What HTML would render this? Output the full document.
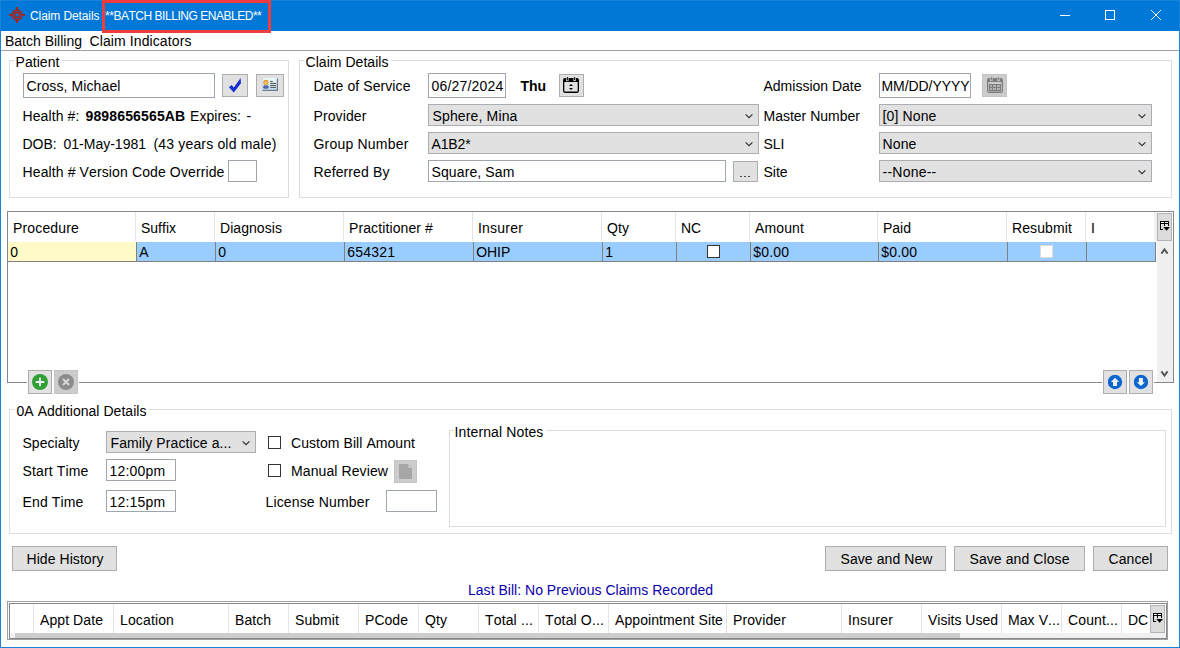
<!DOCTYPE html>
<html><head><meta charset="utf-8">
<style>
*{box-sizing:border-box;margin:0;padding:0}
html,body{width:1180px;height:648px;overflow:hidden;background:#fff}
body{position:relative;font-family:"Liberation Sans",sans-serif;font-size:14px;color:#000}
.a{position:absolute}
.t{position:absolute;white-space:nowrap;line-height:16px;font-size:14px;font-kerning:none}
.b{font-weight:bold}
.grp{position:absolute;border:1px solid #dcdcdc}
.tb{position:absolute;border:1px solid #a0a6ae;background:#fff}
.cb{position:absolute;border:1px solid #adadad;background:#e1e1e1}
.btn{position:absolute;border:1px solid #adadad;background:#e1e1e1}
.chk{position:absolute;width:13px;height:13px;border:1px solid #333;background:#fff}
</style></head><body>
<div class="a" style="left:0px;top:0px;width:1180px;height:31px;background:#0078d7"></div>
<div class="a" style="left:0px;top:0px;width:1180px;height:1px;background:#1883d7"></div>
<div class="a" style="left:0px;top:0px;width:1px;height:648px;background:#1883d7"></div>
<div class="a" style="left:1179px;top:0px;width:1px;height:648px;background:#1883d7"></div>
<div class="a" style="left:0px;top:647px;width:1180px;height:1px;background:#1883d7"></div>
<svg class="a" style="left:9px;top:7px" width="16" height="16" viewBox="0 0 16 16">
 <g fill="none" stroke="#a82418" stroke-width="1.6"><circle cx="8" cy="8" r="4.9"/><circle cx="8" cy="8" r="2.6"/></g>
 <g fill="#a82418"><rect x="7" y="0" width="2" height="4"/><rect x="7" y="12" width="2" height="4"/><rect x="0" y="7" width="4" height="2"/><rect x="12" y="7" width="4" height="2"/></g>
</svg>
<div class="t" style="left:30px;top:8px;font-size:12px;color:#fff;letter-spacing:-0.1px">Claim Details</div>
<div class="t" style="left:105px;top:8px;font-size:12px;color:#fff;letter-spacing:-0.47px">**BATCH BILLING ENABLED**</div>
<div class="a" style="left:102px;top:0px;width:169px;height:33px;border:3px solid #f03c3c"></div>
<div class="a" style="left:1060px;top:15px;width:10px;height:1px;background:#fff"></div>
<div class="a" style="left:1105px;top:10px;width:10px;height:10px;border:1px solid #fff"></div>
<svg class="a" style="left:1150px;top:9px" width="12" height="12" viewBox="0 0 12 12"><path d="M1 1L11 11M11 1L1 11" stroke="#fff" stroke-width="1"/></svg>
<div class="t" style="left:5.0px;top:33px;letter-spacing:-0.003px;">Batch Billing</div>
<div class="t" style="left:89.5px;top:33px;letter-spacing:0.102px;">Claim Indicators</div>
<div class="a" style="left:1px;top:50px;width:1178px;height:1px;background:#a0a0a0"></div>
<div class="a" style="left:9px;top:60px;width:280px;height:138px;border:1px solid #dcdcdc"></div>
<div class="t" style="left:13.5px;top:54px;letter-spacing:0.059px;padding:0 2px;background:#fff">Patient</div>
<div class="a" style="left:23px;top:73px;width:192px;height:25px;border:1px solid #a0a6ae;background:#fff"></div>
<div class="t" style="left:26.5px;top:78px;letter-spacing:0.101px;">Cross, Michael</div>
<div class="a" style="left:222px;top:74px;width:26px;height:23px;border:1px solid #adadad;background:#e1e1e1"></div>
<svg class="a" style="left:226px;top:77px" width="18" height="18" viewBox="0 0 18 18"><path d="M2.9 10.2L5.6 8L7.8 10.6L14.6 1.1L15 6.2L7.8 15.5Z" fill="#1a2fd0"/></svg>
<div class="a" style="left:256px;top:74px;width:28px;height:23px;border:1px solid #adadad;background:#e1e1e1"></div>
<svg class="a" style="left:262px;top:78px" width="16" height="13" viewBox="0 0 16 13">
<defs><linearGradient id="cg" x1="0" y1="0" x2="0" y2="1"><stop offset="0" stop-color="#f0fafd"/><stop offset="1" stop-color="#c4dbe3"/></linearGradient>
<radialGradient id="hg" cx="0.5" cy="0.6" r="0.6"><stop offset="0" stop-color="#ffd070"/><stop offset="1" stop-color="#d8902a"/></radialGradient></defs>
<rect x="0.5" y="0.5" width="15.5" height="12.5" fill="#6a7c8c"/><rect x="0" y="0" width="14.8" height="11.8" fill="url(#cg)"/>
<rect x="0" y="0" width="0.8" height="11.8" fill="#c8cbe8"/>
<path d="M1.1 9.2C1.1 7.6 2.4 7 3.9 7S6.8 7.6 6.8 9.2C6.8 10.2 5.5 10.8 3.9 10.8S1.1 10.2 1.1 9.2Z" fill="#4a62ad"/>
<path d="M3.3 7.1L3.9 8.6L4.5 7.1Z" fill="#fff"/>
<circle cx="3.9" cy="4.4" r="2.6" fill="url(#hg)"/>
<path d="M8.2 3.4H10.7M8.2 5.4H14M8.2 7.4H14M8.2 9.4H14" stroke="#505050" stroke-width="1"/></svg>
<div class="t" style="left:22.5px;top:108px;letter-spacing:0.107px;">Health #:</div>
<div class="t" style="left:85.5px;top:108px;letter-spacing:0.150px;font-weight:bold">9898656565AB</div>
<div class="t" style="left:190.0px;top:108px;letter-spacing:0.053px;">Expires:</div>
<div class="t" style="left:246.5px;top:108px;letter-spacing:0.338px;">-</div>
<div class="t" style="left:22.5px;top:136px;letter-spacing:-0.057px;">DOB:</div>
<div class="t" style="left:63.5px;top:136px;">01-May-1981</div>
<div class="t" style="left:153.5px;top:136px;letter-spacing:0.167px;">(43 years old male)</div>
<div class="t" style="left:22.5px;top:164px;letter-spacing:0.119px;">Health # Version Code Override</div>
<div class="a" style="left:228px;top:160px;width:29px;height:22px;border:1px solid #a0a6ae;background:#fff"></div>
<div class="a" style="left:299px;top:60px;width:873px;height:138px;border:1px solid #dcdcdc"></div>
<div class="t" style="left:303.5px;top:54px;letter-spacing:0.041px;padding:0 2px;background:#fff">Claim Details</div>
<div class="t" style="left:313.5px;top:78px;letter-spacing:0.086px;">Date of Service</div>
<div class="a" style="left:428px;top:73px;width:78px;height:25px;border:1px solid #a0a6ae;background:#fff"></div>
<div class="t" style="left:431.5px;top:78px;letter-spacing:0.193px;">06/27/2024</div>
<div class="t" style="left:520.5px;top:78px;font-weight:bold">Thu</div>
<div class="a" style="left:559px;top:74px;width:25px;height:23px;border:1px solid #adadad;background:#e1e1e1"></div>
<svg class="a" style="left:563px;top:77px" width="16" height="16" viewBox="0 0 16 16">
<rect x="0" y="1" width="16" height="15" rx="2.2" fill="#000"/><rect x="1.3" y="5" width="13.4" height="9.6" rx="0.6" fill="#e1e1e1"/>
<rect x="3.6" y="-0.5" width="1.6" height="4.3" fill="#000" stroke="#e1e1e1" stroke-width="0.7"/><rect x="10.8" y="-0.5" width="1.6" height="4.3" fill="#000" stroke="#e1e1e1" stroke-width="0.7"/>
<path d="M6 9.1L8 7.1L10 9.1Z M6 11.1L8 13.1L10 11.1Z" fill="#000"/></svg>
<div class="t" style="left:313.5px;top:108px;letter-spacing:0.109px;">Provider</div>
<div class="a" style="left:428px;top:104px;width:331px;height:22px;border:1px solid #abadb3;background:#e1e1e1"></div>
<div class="t" style="left:432.5px;top:108px;letter-spacing:0.144px;">Sphere, Mina</div>
<svg class="a" style="left:745px;top:113px" width="9" height="6" viewBox="0 0 9 6"><path d="M0.6 1.3L4 4.7L7.4 1.3" fill="none" stroke="#333" stroke-width="1.2"/></svg>
<div class="t" style="left:313.5px;top:136px;letter-spacing:0.201px;">Group Number</div>
<div class="a" style="left:428px;top:132px;width:331px;height:22px;border:1px solid #abadb3;background:#e1e1e1"></div>
<div class="t" style="left:431.5px;top:136px;letter-spacing:-0.139px;">A1B2*</div>
<svg class="a" style="left:745px;top:141px" width="9" height="6" viewBox="0 0 9 6"><path d="M0.6 1.3L4 4.7L7.4 1.3" fill="none" stroke="#333" stroke-width="1.2"/></svg>
<div class="t" style="left:313.5px;top:164px;letter-spacing:0.119px;">Referred By</div>
<div class="a" style="left:428px;top:160px;width:298px;height:22px;border:1px solid #a0a6ae;background:#fff"></div>
<div class="t" style="left:431.5px;top:164px;letter-spacing:0.117px;">Square, Sam</div>
<div class="a" style="left:733px;top:161px;width:25px;height:21px;border:1px solid #adadad;background:#e1e1e1"></div>
<div class="a" style="left:740px;top:176px;width:2px;height:1px;background:#444"></div>
<div class="a" style="left:744px;top:176px;width:2px;height:1px;background:#444"></div>
<div class="a" style="left:748px;top:176px;width:2px;height:1px;background:#444"></div>
<div class="t" style="left:763.5px;top:78px;">Admission Date</div>
<div class="a" style="left:879px;top:73px;width:92px;height:25px;border:1px solid #a0a6ae;background:#fff"></div>
<div class="t" style="left:881.5px;top:78px;letter-spacing:-0.068px;">MM/DD/YYYY</div>
<div class="a" style="left:982px;top:74px;width:25px;height:23px;border:1px solid #c4c4c4;background:#cccccc"></div>
<svg class="a" style="left:987px;top:77px" width="16" height="16" viewBox="0 0 16 16">
<rect x="0" y="1" width="16" height="15" rx="2.2" fill="#7d7d7d"/><rect x="1.3" y="5" width="13.4" height="9.6" rx="0.6" fill="#cccccc"/>
<rect x="3.6" y="-0.5" width="1.6" height="4.3" fill="#7d7d7d" stroke="#cccccc" stroke-width="0.7"/><rect x="10.8" y="-0.5" width="1.6" height="4.3" fill="#7d7d7d" stroke="#cccccc" stroke-width="0.7"/>
<rect x="2.5" y="7.5" width="11" height="6" fill="#b0b0b0" stroke="#7d7d7d" stroke-width="1"/><path d="M5.5 7V14M9.5 7V14M2 10.5H14" stroke="#7d7d7d" stroke-width="1"/></svg>
<div class="t" style="left:763.5px;top:108px;">Master Number</div>
<div class="a" style="left:879px;top:104px;width:273px;height:22px;border:1px solid #abadb3;background:#e1e1e1"></div>
<div class="t" style="left:882.5px;top:108px;letter-spacing:0.135px;">[0] None</div>
<svg class="a" style="left:1138px;top:113px" width="9" height="6" viewBox="0 0 9 6"><path d="M0.6 1.3L4 4.7L7.4 1.3" fill="none" stroke="#333" stroke-width="1.2"/></svg>
<div class="t" style="left:763.5px;top:136px;letter-spacing:-0.005px;">SLI</div>
<div class="a" style="left:879px;top:132px;width:273px;height:22px;border:1px solid #abadb3;background:#e1e1e1"></div>
<div class="t" style="left:882.5px;top:136px;letter-spacing:0.133px;">None</div>
<svg class="a" style="left:1138px;top:141px" width="9" height="6" viewBox="0 0 9 6"><path d="M0.6 1.3L4 4.7L7.4 1.3" fill="none" stroke="#333" stroke-width="1.2"/></svg>
<div class="t" style="left:763.5px;top:164px;letter-spacing:-0.031px;">Site</div>
<div class="a" style="left:879px;top:160px;width:273px;height:22px;border:1px solid #abadb3;background:#e1e1e1"></div>
<div class="t" style="left:882.5px;top:164px;letter-spacing:0.235px;">--None--</div>
<svg class="a" style="left:1138px;top:169px" width="9" height="6" viewBox="0 0 9 6"><path d="M0.6 1.3L4 4.7L7.4 1.3" fill="none" stroke="#333" stroke-width="1.2"/></svg>
<div class="a" style="left:7px;top:211px;width:1167px;height:1px;background:#828790"></div>
<div class="a" style="left:7px;top:211px;width:1px;height:172px;background:#828790"></div>
<div class="a" style="left:1173px;top:211px;width:1px;height:172px;background:#828790"></div>
<div class="a" style="left:7px;top:382px;width:20px;height:1px;background:#828790"></div>
<div class="a" style="left:79px;top:382px;width:1023px;height:1px;background:#828790"></div>
<div class="a" style="left:1154px;top:382px;width:20px;height:1px;background:#828790"></div>
<div class="a" style="left:135px;top:212px;width:1px;height:29px;background:#e5e5e5"></div>
<div class="a" style="left:214px;top:212px;width:1px;height:29px;background:#e5e5e5"></div>
<div class="a" style="left:343px;top:212px;width:1px;height:29px;background:#e5e5e5"></div>
<div class="a" style="left:472px;top:212px;width:1px;height:29px;background:#e5e5e5"></div>
<div class="a" style="left:601px;top:212px;width:1px;height:29px;background:#e5e5e5"></div>
<div class="a" style="left:675px;top:212px;width:1px;height:29px;background:#e5e5e5"></div>
<div class="a" style="left:749px;top:212px;width:1px;height:29px;background:#e5e5e5"></div>
<div class="a" style="left:877px;top:212px;width:1px;height:29px;background:#e5e5e5"></div>
<div class="a" style="left:1006px;top:212px;width:1px;height:29px;background:#e5e5e5"></div>
<div class="a" style="left:1085px;top:212px;width:1px;height:29px;background:#e5e5e5"></div>
<div class="a" style="left:1154px;top:212px;width:3px;height:29px;background:#f0f0f0"></div>
<div class="t" style="left:13.0px;top:220px;letter-spacing:0.156px;">Procedure</div>
<div class="t" style="left:141.0px;top:220px;letter-spacing:-0.002px;">Suffix</div>
<div class="t" style="left:220.0px;top:220px;letter-spacing:0.058px;">Diagnosis</div>
<div class="t" style="left:349.0px;top:220px;letter-spacing:0.108px;">Practitioner #</div>
<div class="t" style="left:478.0px;top:220px;letter-spacing:0.204px;">Insurer</div>
<div class="t" style="left:607.0px;top:220px;letter-spacing:0.074px;">Qty</div>
<div class="t" style="left:681.0px;top:220px;letter-spacing:-0.110px;">NC</div>
<div class="t" style="left:755.0px;top:220px;letter-spacing:0.125px;">Amount</div>
<div class="t" style="left:883.0px;top:220px;letter-spacing:-0.005px;">Paid</div>
<div class="t" style="left:1012.0px;top:220px;letter-spacing:0.109px;">Resubmit</div>
<div class="t" style="left:1091.0px;top:220px;letter-spacing:0.110px;">I</div>
<div class="a" style="left:8px;top:242px;width:128px;height:19px;background:#fffac8"></div>
<div class="a" style="left:136px;top:242px;width:1020px;height:19px;background:#99ccff"></div>
<div class="a" style="left:8px;top:261px;width:1148px;height:1px;background:#808080"></div>
<div class="a" style="left:136px;top:242px;width:1px;height:20px;background:#808080"></div>
<div class="a" style="left:215px;top:242px;width:1px;height:20px;background:#808080"></div>
<div class="a" style="left:344px;top:242px;width:1px;height:20px;background:#808080"></div>
<div class="a" style="left:473px;top:242px;width:1px;height:20px;background:#808080"></div>
<div class="a" style="left:602px;top:242px;width:1px;height:20px;background:#808080"></div>
<div class="a" style="left:676px;top:242px;width:1px;height:20px;background:#808080"></div>
<div class="a" style="left:750px;top:242px;width:1px;height:20px;background:#808080"></div>
<div class="a" style="left:878px;top:242px;width:1px;height:20px;background:#808080"></div>
<div class="a" style="left:1007px;top:242px;width:1px;height:20px;background:#808080"></div>
<div class="a" style="left:1086px;top:242px;width:1px;height:20px;background:#808080"></div>
<div class="a" style="left:1155px;top:242px;width:1px;height:20px;background:#808080"></div>
<div class="t" style="left:10.2px;top:244px;letter-spacing:0.214px;">0</div>
<div class="t" style="left:139.2px;top:244px;letter-spacing:-0.338px;">A</div>
<div class="t" style="left:218.2px;top:244px;letter-spacing:0.214px;">0</div>
<div class="t" style="left:347.2px;top:244px;letter-spacing:0.214px;">654321</div>
<div class="t" style="left:476.2px;top:244px;letter-spacing:-0.057px;">OHIP</div>
<div class="t" style="left:605.2px;top:244px;letter-spacing:0.214px;">1</div>
<div class="t" style="left:753.2px;top:244px;letter-spacing:0.193px;">$0.00</div>
<div class="t" style="left:881.2px;top:244px;letter-spacing:0.193px;">$0.00</div>
<div class="a" style="left:707px;top:245px;width:13px;height:13px;border:1px solid #333;background:#fff"></div>
<div class="a" style="left:1040px;top:245px;width:13px;height:13px;border:1px solid #dcdcdc;background:#fff"></div>
<div class="a" style="left:1157px;top:241px;width:16px;height:141px;background:#f0f0f0"></div>
<div class="a" style="left:1157px;top:213px;width:15px;height:28px;border:1px solid #b4b4b4;background:#dcdcdc"></div>
<svg class="a" style="left:1159px;top:220px" width="12" height="12" viewBox="0 0 12 12">
<rect x="1" y="1" width="9" height="1" fill="#000"/><rect x="2" y="2" width="3" height="1" fill="#fff"/><rect x="6" y="2" width="3" height="1" fill="#fff"/>
<rect x="1" y="3" width="9" height="1" fill="#000"/><rect x="1" y="1" width="1" height="9" fill="#000"/><rect x="5" y="1" width="1" height="5" fill="#000"/><rect x="9" y="1" width="1" height="5" fill="#000"/>
<rect x="1" y="9" width="3" height="1" fill="#000"/><rect x="2" y="4" width="7" height="2" fill="#e6e6e6" opacity="0.6"/><rect x="1" y="4" width="1" height="6" fill="#000"/><rect x="5" y="4" width="1" height="2" fill="#000"/><rect x="9" y="4" width="1" height="2" fill="#000"/>
<path d="M4.2 7H11L7.6 10.8Z" fill="#000"/></svg>
<svg class="a" style="left:1160px;top:247px" width="10" height="8" viewBox="0 0 10 8"><path d="M1.4 6.6L4.5 2.4L7.6 6.6" fill="none" stroke="#555" stroke-width="1.9"/></svg>
<svg class="a" style="left:1160px;top:370px" width="10" height="8" viewBox="0 0 10 8"><path d="M1.4 1.4L4.5 5.6L7.6 1.4" fill="none" stroke="#555" stroke-width="1.9"/></svg>
<div class="a" style="left:28px;top:370px;width:24px;height:24px;border:1px solid #adadad;background:#e1e1e1"></div>
<svg class="a" style="left:32px;top:374px" width="16" height="16" viewBox="0 0 16 16"><circle cx="8" cy="8" r="8" fill="#30a035"/><path d="M8 3.7v8.6M3.7 8h8.6" stroke="#fbeefb" stroke-width="1.8"/></svg>
<div class="a" style="left:54px;top:370px;width:24px;height:24px;border:1px solid #c4c4c4;background:#cccccc"></div>
<svg class="a" style="left:58px;top:374px" width="16" height="16" viewBox="0 0 16 16"><circle cx="8" cy="8" r="8" fill="#8c8c8c"/><path d="M5 5L11 11M11 5L5 11" stroke="#d8d8d8" stroke-width="2"/></svg>
<div class="a" style="left:1103px;top:370px;width:24px;height:24px;border:1px solid #adadad;background:#e1e1e1"></div>
<svg class="a" style="left:1108px;top:375px" width="15" height="15" viewBox="0.5 0.5 15 15"><circle cx="7.5" cy="7.5" r="7.2" fill="#0a66d0"/><path d="M7.5 3.3L11.6 7.4H9.5V11.4H5.5V7.4H3.4Z" fill="#f2f2f2"/></svg>
<div class="a" style="left:1129px;top:370px;width:24px;height:24px;border:1px solid #adadad;background:#e1e1e1"></div>
<svg class="a" style="left:1134px;top:375px" width="15" height="15" viewBox="0.5 0.5 15 15"><circle cx="7.5" cy="7.5" r="7.2" fill="#0a66d0"/><path d="M7.4 11.6L11.5 7.8H9.4V3.5H5.4V7.8H3.4Z" fill="#f2f2f2"/></svg>
<div class="a" style="left:9px;top:409px;width:1163px;height:125px;border:1px solid #dcdcdc"></div>
<div class="t" style="left:14.5px;top:403px;letter-spacing:0.039px;padding:0 2px;background:#fff">0A Additional Details</div>
<div class="t" style="left:22.5px;top:435px;letter-spacing:0.021px;">Specialty</div>
<div class="a" style="left:106px;top:431px;width:150px;height:22px;border:1px solid #abadb3;background:#e1e1e1"></div>
<div class="t" style="left:110.5px;top:435px;letter-spacing:0.099px;">Family Practice a...</div>
<svg class="a" style="left:242px;top:440px" width="9" height="6" viewBox="0 0 9 6"><path d="M0.6 1.3L4 4.7L7.4 1.3" fill="none" stroke="#333" stroke-width="1.2"/></svg>
<div class="t" style="left:22.5px;top:463px;letter-spacing:0.143px;">Start Time</div>
<div class="a" style="left:106px;top:459px;width:70px;height:22px;border:1px solid #a0a6ae;background:#fff"></div>
<div class="t" style="left:109.5px;top:463px;letter-spacing:0.217px;">12:00pm</div>
<div class="t" style="left:22.5px;top:494px;letter-spacing:0.136px;">End Time</div>
<div class="a" style="left:106px;top:490px;width:70px;height:22px;border:1px solid #a0a6ae;background:#fff"></div>
<div class="t" style="left:109.5px;top:494px;letter-spacing:0.217px;">12:15pm</div>
<div class="a" style="left:268px;top:436px;width:13px;height:13px;border:1px solid #333;background:#fff"></div>
<div class="t" style="left:291.0px;top:435px;letter-spacing:0.059px;">Custom Bill Amount</div>
<div class="a" style="left:268px;top:464px;width:13px;height:13px;border:1px solid #333;background:#fff"></div>
<div class="t" style="left:291.0px;top:463px;letter-spacing:0.099px;">Manual Review</div>
<div class="a" style="left:394px;top:460px;width:23px;height:23px;border:1px solid #c4c4c4;background:#cccccc"></div>
<svg class="a" style="left:399px;top:464px" width="13" height="15" viewBox="0 0 13 15"><path d="M0 0H9L13 4V15H0Z" fill="#a6a6a6"/><path d="M9 0V4H13Z" fill="#c4c4c4"/></svg>
<div class="t" style="left:265.5px;top:494px;letter-spacing:0.147px;">License Number</div>
<div class="a" style="left:386px;top:490px;width:51px;height:22px;border:1px solid #a0a6ae;background:#fff"></div>
<div class="a" style="left:449px;top:430px;width:717px;height:97px;border:1px solid #dcdcdc"></div>
<div class="t" style="left:453.5px;top:424px;letter-spacing:0.132px;padding:0 2px 0 1px;background:#fff">Internal Notes</div>
<div class="a" style="left:12px;top:546px;width:105px;height:25px;border:1px solid #adadad;background:#e1e1e1"></div>
<div class="t" style="left:26.5px;top:551px;letter-spacing:0.063px;">Hide History</div>
<div class="a" style="left:825px;top:546px;width:121px;height:25px;border:1px solid #adadad;background:#e1e1e1"></div>
<div class="t" style="left:840.5px;top:551px;letter-spacing:0.079px;">Save and New</div>
<div class="a" style="left:954px;top:546px;width:131px;height:25px;border:1px solid #adadad;background:#e1e1e1"></div>
<div class="t" style="left:969.5px;top:551px;letter-spacing:0.083px;">Save and Close</div>
<div class="a" style="left:1093px;top:546px;width:75px;height:25px;border:1px solid #adadad;background:#e1e1e1"></div>
<div class="t" style="left:1108.5px;top:551px;letter-spacing:0.070px;">Cancel</div>
<div class="t" style="left:468.0px;top:582px;letter-spacing:0.020px;color:#0a00aa">Last Bill: No Previous Claims Recorded</div>
<div class="a" style="left:7px;top:601px;width:1161px;height:39px;border:1px solid #a0a0a0"></div>
<div class="a" style="left:9px;top:603px;width:1158px;height:36px;border:1px solid #828790"></div>
<div class="a" style="left:33px;top:604px;width:1px;height:29px;background:#e5e5e5"></div>
<div class="a" style="left:113px;top:604px;width:1px;height:29px;background:#e5e5e5"></div>
<div class="a" style="left:228px;top:604px;width:1px;height:29px;background:#e5e5e5"></div>
<div class="a" style="left:288px;top:604px;width:1px;height:29px;background:#e5e5e5"></div>
<div class="a" style="left:358px;top:604px;width:1px;height:29px;background:#e5e5e5"></div>
<div class="a" style="left:418px;top:604px;width:1px;height:29px;background:#e5e5e5"></div>
<div class="a" style="left:478px;top:604px;width:1px;height:29px;background:#e5e5e5"></div>
<div class="a" style="left:538px;top:604px;width:1px;height:29px;background:#e5e5e5"></div>
<div class="a" style="left:608px;top:604px;width:1px;height:29px;background:#e5e5e5"></div>
<div class="a" style="left:726px;top:604px;width:1px;height:29px;background:#e5e5e5"></div>
<div class="a" style="left:841px;top:604px;width:1px;height:29px;background:#e5e5e5"></div>
<div class="a" style="left:921px;top:604px;width:1px;height:29px;background:#e5e5e5"></div>
<div class="a" style="left:1001px;top:604px;width:1px;height:29px;background:#e5e5e5"></div>
<div class="a" style="left:1061px;top:604px;width:1px;height:29px;background:#e5e5e5"></div>
<div class="a" style="left:1121px;top:604px;width:1px;height:29px;background:#e5e5e5"></div>
<div class="t" style="left:40.0px;top:612px;letter-spacing:0.082px;">Appt Date</div>
<div class="t" style="left:120.0px;top:612px;letter-spacing:0.134px;">Location</div>
<div class="t" style="left:235.0px;top:612px;letter-spacing:0.040px;">Batch</div>
<div class="t" style="left:295.0px;top:612px;letter-spacing:0.071px;">Submit</div>
<div class="t" style="left:365.0px;top:612px;letter-spacing:0.039px;">PCode</div>
<div class="t" style="left:425.0px;top:612px;letter-spacing:0.074px;">Qty</div>
<div class="t" style="left:485.0px;top:612px;letter-spacing:0.146px;">Total ...</div>
<div class="t" style="left:545.0px;top:612px;letter-spacing:0.143px;">Total O...</div>
<div class="t" style="left:615.0px;top:612px;letter-spacing:0.086px;">Appointment Site</div>
<div class="t" style="left:733.0px;top:612px;letter-spacing:0.109px;">Provider</div>
<div class="t" style="left:848.0px;top:612px;letter-spacing:0.204px;">Insurer</div>
<div class="t" style="left:928.0px;top:612px;letter-spacing:-0.002px;">Visits Used</div>
<div class="t" style="left:1008.0px;top:612px;letter-spacing:0.082px;">Max V...</div>
<div class="t" style="left:1068.0px;top:612px;letter-spacing:0.122px;">Count...</div>
<div class="t" style="left:1128.0px;top:612px;letter-spacing:-0.110px;">DC</div>
<div class="a" style="left:10px;top:633px;width:1156px;height:5px;background:#f0f0f0"></div>
<div class="a" style="left:15px;top:633px;width:945px;height:5px;background:#cdcdcd"></div>
<div class="a" style="left:1150px;top:605px;width:15px;height:28px;border:1px solid #b4b4b4;background:#dcdcdc"></div>
<svg class="a" style="left:1152px;top:612px" width="12" height="12" viewBox="0 0 12 12">
<rect x="1" y="1" width="9" height="1" fill="#000"/><rect x="2" y="2" width="3" height="1" fill="#fff"/><rect x="6" y="2" width="3" height="1" fill="#fff"/>
<rect x="1" y="3" width="9" height="1" fill="#000"/><rect x="1" y="1" width="1" height="9" fill="#000"/><rect x="5" y="1" width="1" height="5" fill="#000"/><rect x="9" y="1" width="1" height="5" fill="#000"/>
<rect x="1" y="9" width="3" height="1" fill="#000"/><rect x="2" y="4" width="7" height="2" fill="#e6e6e6" opacity="0.6"/><rect x="1" y="4" width="1" height="6" fill="#000"/><rect x="5" y="4" width="1" height="2" fill="#000"/><rect x="9" y="4" width="1" height="2" fill="#000"/>
<path d="M4.2 7H11L7.6 10.8Z" fill="#000"/></svg>
</body></html>
